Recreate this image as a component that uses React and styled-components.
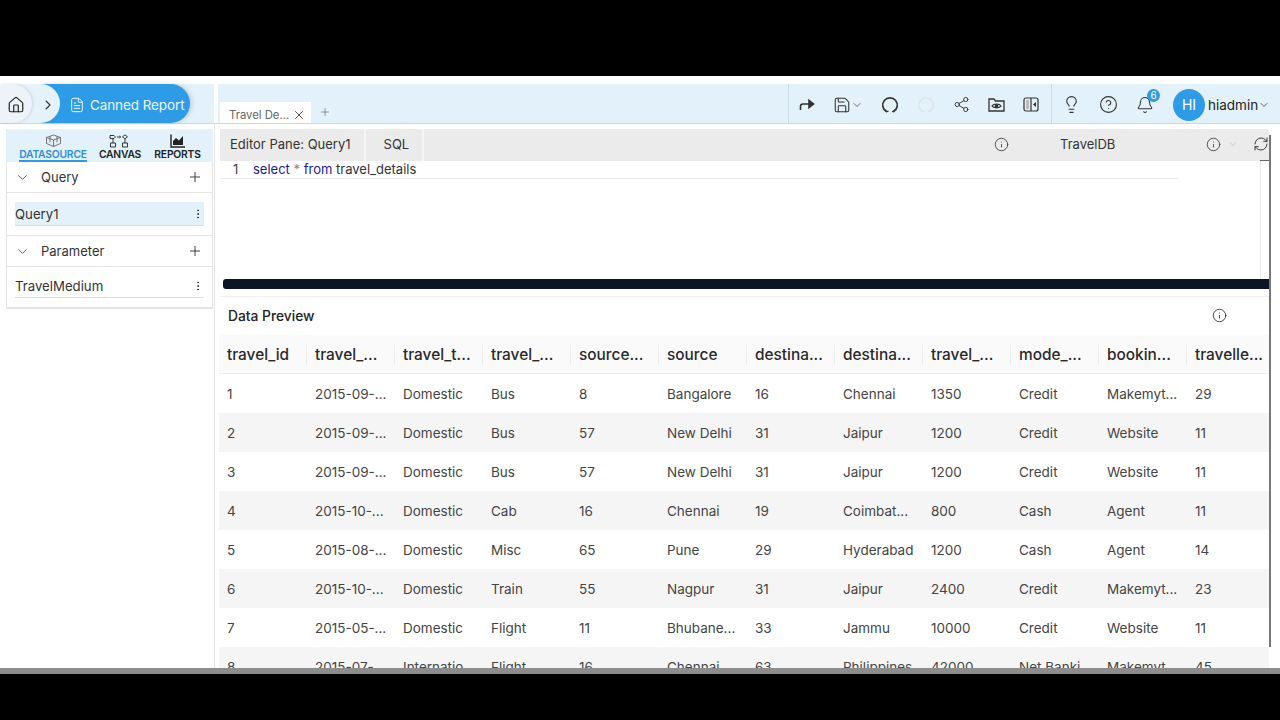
import React from 'react';
import styled, { createGlobalStyle } from 'styled-components';
import {
  Home, ChevronRight, ChevronDown, FileText, X, Plus, Save, Share2, Lightbulb,
  CircleHelp, Bell, Info, RefreshCw, MoreVertical,
} from 'lucide-react';

const GlobalStyle = createGlobalStyle`
  html, body { margin: 0; padding: 0; background: #000; }
  body { font-family: "Inter", "Noto Sans", sans-serif; color: #333; }
`;

const Page = styled.div`
  width: 1280px;
  height: 720px;
  overflow: hidden;
  display: flex;
  flex-direction: column;
  background: #000;
`;

const BlackBar = styled.div`
  height: ${p => p.$h}px;
  flex: none;
  background: #000;
`;

const Screen = styled.div`
  height: 598px;
  flex: none;
  background: #fff;
  padding-top: 8px;
  box-sizing: border-box;
  display: flex;
  flex-direction: column;
  border-bottom: 6px solid #8d8d8d;
`;

const Header = styled.header`
  height: 40px;
  flex: none;
  display: flex;
  background: #e3f1fa;
  border-bottom: 1px solid #c6dbe8;
  box-sizing: border-box;
`;

const Crumbs = styled.div`
  width: 214px;
  flex: none;
  display: flex;
  align-items: stretch;
  border-right: 4px solid #fff;
  box-sizing: content-box;
`;

const HomeCrumb = styled.div`
  width: 32px;
  padding-top: 2px;
  box-sizing: border-box;
  display: flex;
  align-items: center;
  justify-content: center;
  background: #ecf4f9;
  border-radius: 0 20px 20px 0;
  z-index: 3;
  box-shadow: 1px 0 3px rgba(0, 0, 0, 0.12);
  color: #222;
`;

const ArrowCrumb = styled.div`
  width: 42px;
  margin-left: -14px;
  padding: 2px 0 0 18px;
  box-sizing: border-box;
  display: flex;
  align-items: center;
  justify-content: center;
  background: #e6f2fa;
  border-radius: 0 20px 20px 0;
  z-index: 2;
  color: #333;
`;

const ReportPill = styled.div`
  width: 150px;
  margin-left: -20px;
  padding: 2px 0 0 29px;
  box-sizing: border-box;
  display: flex;
  align-items: center;
  gap: 5px;
  background: #2e9be6;
  border-radius: 0 20px 20px 0;
  color: #eaf6ff;
  font-size: 13.5px;
  white-space: nowrap;
  letter-spacing: -0.1px;
  box-shadow: 2px 0 4px rgba(0, 0, 0, 0.15);
  z-index: 1;
`;

const TabStrip = styled.div`
  flex: 1;
  display: flex;
  align-items: flex-end;
  padding-left: 2px;
`;

const OpenTab = styled.div`
  width: 91px;
  height: 21px;
  padding: 5px 5px 0 9px;
  box-sizing: border-box;
  display: flex;
  align-items: center;
  justify-content: space-between;
  background: #fff;
  font-size: 11.3px;
  color: #666;
  white-space: nowrap;
`;

const AddTab = styled.div`
  width: 28px;
  height: 22px;
  display: flex;
  align-items: center;
  justify-content: center;
  color: #777;
`;

const Tools = styled.div`
  width: 264px;
  flex: none;
  display: flex;
  align-items: center;
  justify-content: space-between;
  padding: 2px 12px 0 10px;
  box-sizing: border-box;
  border-left: 1px solid #c6dbe8;
  border-right: 1px solid #c6dbe8;
  color: #333;
`;

const ToolSlot = styled.span`
  display: inline-flex;
  align-items: center;
  color: ${p => (p.$off ? '#dde5ea' : '#333')};
`;

const UserTools = styled.div`
  width: 228px;
  flex: none;
  display: flex;
  align-items: center;
  padding: 2px 0 0 10px;
  box-sizing: border-box;
  color: #333;
`;

const IconSlot = styled.span`
  position: relative;
  display: inline-flex;
  width: 37px;
  justify-content: flex-start;
`;

const Badge = styled.span`
  position: absolute;
  top: -7px;
  left: 11px;
  width: 13px;
  height: 13px;
  border-radius: 50%;
  background: #2e9be6;
  color: #fff;
  font-size: 10px;
  line-height: 13px;
  text-align: center;
`;

const Avatar = styled.span`
  width: 32px;
  height: 32px;
  border-radius: 50%;
  background: #2e9be6;
  color: #fff;
  font-size: 14px;
  display: flex;
  align-items: center;
  justify-content: center;
`;

const UserName = styled.span`
  margin-left: 3px;
  font-size: 13.5px;
  color: #222;
  display: inline-flex;
  align-items: center;
`;

const Body = styled.div`
  flex: 1;
  min-height: 0;
  display: flex;
`;

const Sidebar = styled.aside`
  width: 214px;
  flex: none;
  padding: 5px 1px 0 6px;
  box-sizing: border-box;
`;

const SideTabs = styled.div`
  height: 33px;
  display: grid;
  grid-template-columns: 82px 52px 1fr;
  padding: 0 4px 0 6px;
  background: #e3f1fa;
`;

const SideTab = styled.div`
  display: flex;
  flex-direction: column;
  align-items: center;
  justify-content: flex-end;
  font-size: 10.3px;
  font-weight: 600;
  letter-spacing: -0.2px;
  white-space: nowrap;
  color: ${p => (p.$active ? '#2e8fd6' : '#222')};
  svg { color: ${p => (p.$active ? '#666' : '#222')}; }
`;

const SideTabLabel = styled.span`
  border-bottom: ${p => (p.$active ? '2px solid #2e9be6' : '0')};
  padding-bottom: ${p => (p.$active ? '0' : '2px')};
`;

const SidePanel = styled.div`
  height: 145px;
  border: 1px solid #e4e4e4;
  border-top: 0;
  border-bottom-width: 2px;
  box-sizing: content-box;
`;

const Section = styled.div`
  height: ${p => p.$h}px;
  display: flex;
  align-items: center;
  padding: 0 9px 0 8px;
  font-size: 13px;
  color: #333;
  border-bottom: 1px solid #e4e4e4;
  box-sizing: border-box;
`;

const SectionTitle = styled.span`
  flex: 1;
  margin-left: 11px;
`;

const ItemWrap = styled.div`
  height: ${p => p.$h}px;
  padding: ${p => p.$pad};
  box-sizing: border-box;
  border-bottom: ${p => (p.$line ? '1px solid #e4e4e4' : '0')};
`;

const Item = styled.div`
  height: 23px;
  display: flex;
  align-items: center;
  justify-content: space-between;
  font-size: 13.2px;
  color: #333;
  background: ${p => (p.$selected ? '#e3f1fa' : '#fff')};
  border-bottom: 1px solid #d8dfe4;
`;

const Main = styled.main`
  flex: 1;
  min-width: 0;
  display: flex;
  flex-direction: column;
  padding: 5px 0 0 5px;
  border-left: 1px solid #e4e4e4;
  box-sizing: border-box;
  position: relative;
`;

const Column = styled.div`
  width: 1049px;
  flex: 1;
  min-height: 0;
  display: flex;
  flex-direction: column;
`;

const EditorTabs = styled.div`
  height: 32px;
  flex: none;
  display: flex;
  align-items: stretch;
  background: #ecebeb;
  font-size: 13px;
  color: #333;
`;

const EditorTab = styled.div`
  display: flex;
  align-items: center;
  padding: 0 ${p => p.$pad}px 2px ${p => p.$left}px;
  border-right: 2px solid #f6f6f6;
`;

const EditorInfo = styled.div`
  margin-left: auto;
  width: 65px;
  padding-bottom: 2px;
  box-sizing: border-box;
  display: flex;
  align-items: center;
  color: #333;
`;

const DbSelect = styled.div`
  width: 210px;
  display: flex;
  align-items: center;
  padding: 0 0 2px 1px;
  box-sizing: border-box;
  color: #333;
`;

const DbName = styled.span`
  flex: 1;
`;

const DbIcons = styled.span`
  display: flex;
  align-items: center;
  gap: 6px;
  margin-right: 14px;
  svg + svg { color: #bbb; }
`;

const Editor = styled.div`
  height: 118px;
  flex: none;
  border-right: 1px solid #e8e8e8;
  margin-right: 8px;
  box-sizing: border-box;
`;

const CodeLine = styled.div`
  width: 958px;
  height: 18px;
  padding-bottom: 2px;
  box-sizing: border-box;
  display: flex;
  align-items: center;
  border-bottom: 1px solid #e8e8e8;
  font-size: 13px;
  color: #333;
`;

const LineNo = styled.span`
  width: 33px;
  padding-left: 13px;
  box-sizing: border-box;
  color: #444;
`;

const Keyword = styled.span`
  color: #1a1a8c;
  white-space: pre;
`;

const Operator = styled.span`
  color: #888;
  white-space: pre;
`;

const Splitter = styled.div`
  height: 10px;
  flex: none;
  margin: 0 0 7px 3px;
  background: #0b1524;
  border-radius: 3px 0 0 3px;
`;

const PreviewHead = styled.div`
  height: 39px;
  flex: none;
  display: flex;
  align-items: center;
  justify-content: space-between;
  padding: 0 42px 1px 8px;
  box-sizing: border-box;
  border-top: 1px solid #eee;
  font-size: 13.8px;
  font-weight: 500;
  color: #222;
`;

const TableWrap = styled.div`
  flex: 1;
  min-height: 0;
  overflow: hidden;
  margin-left: -1px;
`;

const Row = styled.div`
  display: grid;
  grid-template-columns: repeat(12, 88px);
  height: 39px;
  padding-top: ${p => (p.$head ? 2 : 0)}px;
  align-items: center;
  background: ${p => (p.$head ? '#fafafa' : p.$alt ? '#f5f5f5' : '#fff')};
  border-bottom: ${p => (p.$head ? '1px solid #eee' : '0')};
  box-sizing: border-box;
`;

const HeadCell = styled.div`
  height: 20px;
  line-height: 20px;
  padding-left: 8px;
  font-size: 15.4px;
  font-weight: 500;
  color: #2a2a2a;
  border-right: 1px solid #ececec;
  white-space: nowrap;
  overflow: hidden;
`;

const Cell = styled.div`
  padding-left: 8px;
  font-size: 13.5px;
  color: #444;
  white-space: nowrap;
`;

const ScrollLine = styled.div`
  position: absolute;
  top: 11px;
  right: 9px;
  bottom: 21px;
  width: 2px;
  background: #777;
`;

const ScrollTick = styled.div`
  position: absolute;
  top: 36px;
  right: 11px;
  width: 9px;
  height: 1px;
  background: #666;
`;

const columns = ['travel_id', 'travel_...', 'travel_t...', 'travel_...', 'source...', 'source', 'destina...', 'destina...', 'travel_...', 'mode_...', 'bookin...', 'travelle...'];

const rows = [
  ['1', '2015-09-...', 'Domestic', 'Bus', '8', 'Bangalore', '16', 'Chennai', '1350', 'Credit', 'Makemyt...', '29'],
  ['2', '2015-09-...', 'Domestic', 'Bus', '57', 'New Delhi', '31', 'Jaipur', '1200', 'Credit', 'Website', '11'],
  ['3', '2015-09-...', 'Domestic', 'Bus', '57', 'New Delhi', '31', 'Jaipur', '1200', 'Credit', 'Website', '11'],
  ['4', '2015-10-...', 'Domestic', 'Cab', '16', 'Chennai', '19', 'Coimbat...', '800', 'Cash', 'Agent', '11'],
  ['5', '2015-08-...', 'Domestic', 'Misc', '65', 'Pune', '29', 'Hyderabad', '1200', 'Cash', 'Agent', '14'],
  ['6', '2015-10-...', 'Domestic', 'Train', '55', 'Nagpur', '31', 'Jaipur', '2400', 'Credit', 'Makemyt...', '23'],
  ['7', '2015-05-...', 'Domestic', 'Flight', '11', 'Bhubane...', '33', 'Jammu', '10000', 'Credit', 'Website', '11'],
  ['8', '2015-07-...', 'Internatio...', 'Flight', '16', 'Chennai', '63', 'Philippines', '42000', 'Net Banki...', 'Makemyt...', '45'],
];

const ForwardIcon = () => (
  <svg width="16" height="14" viewBox="0 0 16 14" fill="none" stroke="currentColor" strokeWidth="1.6">
    <path d="M1.5 12V8.5C1.5 7 2.5 6 4 6h8" />
    <path d="M10 2.5l4.5 3.5-4.5 3.5z" fill="currentColor" />
  </svg>
);

const ArcIcon = () => (
  <svg width="18" height="18" viewBox="0 0 18 18" fill="none" stroke="currentColor" strokeWidth="1.7">
    <path d="M5.5 15.5A7.3 7.3 0 1 1 12.5 15.5" />
    <path d="M4 13.5l1.5 2.2 2-.6M14 13.5l-1.5 2.2-1.4-.4" strokeWidth="1.2" />
  </svg>
);

const FolderEyeIcon = () => (
  <svg width="17" height="15" viewBox="0 0 17 15" fill="none" stroke="currentColor" strokeWidth="1.3">
    <path d="M1 2h5l1.5 2H16v10H1z" />
    <path d="M4 9c1.5-2.4 7.5-2.4 9 0-1.5 2.4-7.5 2.4-9 0z" />
    <circle cx="8.5" cy="9" r="1.2" fill="currentColor" />
  </svg>
);

const SplitIcon = () => (
  <svg width="16" height="15" viewBox="0 0 16 15" fill="none" stroke="currentColor" strokeWidth="1.2">
    <rect x="1" y="1" width="14" height="13" rx="2" />
    <path d="M8 1v13" />
    <path d="M3 3h3v9H3z" fill="#bbb" stroke="none" />
    <path d="M13 5v5l-3-2.5z" fill="currentColor" stroke="none" />
  </svg>
);

const DataIcon = () => (
  <svg width="17" height="14" viewBox="0 0 17 14" fill="none" stroke="currentColor" strokeWidth="0.9">
    <path d="M8.5 1L15.5 3.5 8.5 6 1.5 3.5z" />
    <path d="M1.5 3.5v6l7 3 7-3v-6M8.5 6v6.5M5 2.3v6M12 2.3v6" />
  </svg>
);

const FlowIcon = () => (
  <svg width="22" height="14" viewBox="0 0 22 14" fill="none" stroke="currentColor" strokeWidth="0.9">
    <path d="M1 1.5h4l1.5 1.5L5 4.5H1zM4 5v4M1.5 9h5v4h-5zM16 .8l2.5 2-2.5 2-2.5-2zM16 5v4M13.5 9h5v4h-5z" />
    <path d="M8 3h3.5M10.5 2l1.2 1-1.2 1" />
  </svg>
);

const ReportIcon = () => (
  <svg width="15" height="14" viewBox="0 0 15 14" fill="none" stroke="currentColor" strokeWidth="1.4">
    <path d="M1 0.5V13H15" />
    <path d="M3 11V7l3-3 3 2.5L13 2v9z" fill="currentColor" stroke="none" />
  </svg>
);

export default function App() {
  return (
    <Page>
      <GlobalStyle />
      <BlackBar $h={76} />
      <Screen>
        <Header>
          <Crumbs>
            <HomeCrumb><Home size={18} strokeWidth={1.6} /></HomeCrumb>
            <ArrowCrumb><ChevronRight size={16} strokeWidth={1.6} /></ArrowCrumb>
            <ReportPill><FileText size={16} strokeWidth={1.5} />Canned Report</ReportPill>
          </Crumbs>
          <TabStrip>
            <OpenTab>Travel De...<X size={14} color="#333" strokeWidth={1.5} /></OpenTab>
            <AddTab><Plus size={12} strokeWidth={1.5} /></AddTab>
          </TabStrip>
          <Tools>
            <ToolSlot><ForwardIcon /></ToolSlot>
            <ToolSlot><Save size={18} strokeWidth={1.4} /><ChevronDown size={12} strokeWidth={1.4} /></ToolSlot>
            <ToolSlot><ArcIcon /></ToolSlot>
            <ToolSlot $off><ArcIcon /></ToolSlot>
            <ToolSlot><Share2 size={17} strokeWidth={1.3} /></ToolSlot>
            <ToolSlot><FolderEyeIcon /></ToolSlot>
            <ToolSlot><SplitIcon /></ToolSlot>
          </Tools>
          <UserTools>
            <IconSlot><Lightbulb size={19} strokeWidth={1.4} /></IconSlot>
            <IconSlot><CircleHelp size={19} strokeWidth={1.4} /></IconSlot>
            <IconSlot><Bell size={18} strokeWidth={1.4} /><Badge>6</Badge></IconSlot>
            <Avatar>HI</Avatar>
            <UserName>hiadmin<ChevronDown size={12} strokeWidth={1.4} /></UserName>
          </UserTools>
        </Header>
        <Body>
          <Sidebar>
            <SideTabs>
              <SideTab $active><DataIcon /><SideTabLabel $active>DATASOURCE</SideTabLabel></SideTab>
              <SideTab><FlowIcon /><SideTabLabel>CANVAS</SideTabLabel></SideTab>
              <SideTab><ReportIcon /><SideTabLabel>REPORTS</SideTabLabel></SideTab>
            </SideTabs>
            <SidePanel>
              <Section $h={31}>
                <ChevronDown size={15} strokeWidth={1.3} />
                <SectionTitle>Query</SectionTitle>
                <Plus size={16} strokeWidth={1.4} />
              </Section>
              <ItemWrap $h={43} $pad="9px 8px 0" $line>
                <Item $selected>Query1<MoreVertical size={12} /></Item>
              </ItemWrap>
              <Section $h={31}>
                <ChevronDown size={15} strokeWidth={1.3} />
                <SectionTitle>Parameter</SectionTitle>
                <Plus size={16} strokeWidth={1.4} />
              </Section>
              <ItemWrap $h={40} $pad="7px 8px 0">
                <Item>TravelMedium<MoreVertical size={12} /></Item>
              </ItemWrap>
            </SidePanel>
          </Sidebar>
          <Main>
            <Column>
              <EditorTabs>
                <EditorTab $left={10} $pad={13}>Editor Pane: Query1</EditorTab>
                <EditorTab $left={18} $pad={13}>SQL</EditorTab>
                <EditorInfo><Info size={15} strokeWidth={1.3} /></EditorInfo>
                <DbSelect>
                  <DbName>TravelDB</DbName>
                  <DbIcons>
                    <Info size={15} strokeWidth={1.3} />
                    <ChevronDown size={12} strokeWidth={1.3} />
                  </DbIcons>
                  <RefreshCw size={16} strokeWidth={1.4} />
                </DbSelect>
              </EditorTabs>
              <Editor>
                <CodeLine>
                  <LineNo>1</LineNo>
                  <Keyword>select</Keyword><Operator> * </Operator><Keyword>from </Keyword>travel_details
                </CodeLine>
              </Editor>
              <Splitter />
              <PreviewHead>Data Preview<Info size={15} strokeWidth={1.3} /></PreviewHead>
              <TableWrap>
                <Row $head>{columns.map((c, i) => <HeadCell key={i}>{c}</HeadCell>)}</Row>
                {rows.map((r, i) => (
                  <Row key={i} $alt={i % 2 === 1}>
                    {r.map((c, j) => <Cell key={j}>{c}</Cell>)}
                  </Row>
                ))}
              </TableWrap>
            </Column>
            <ScrollLine />
            <ScrollTick />
          </Main>
        </Body>
      </Screen>
      <BlackBar $h={46} />
    </Page>
  );
}
